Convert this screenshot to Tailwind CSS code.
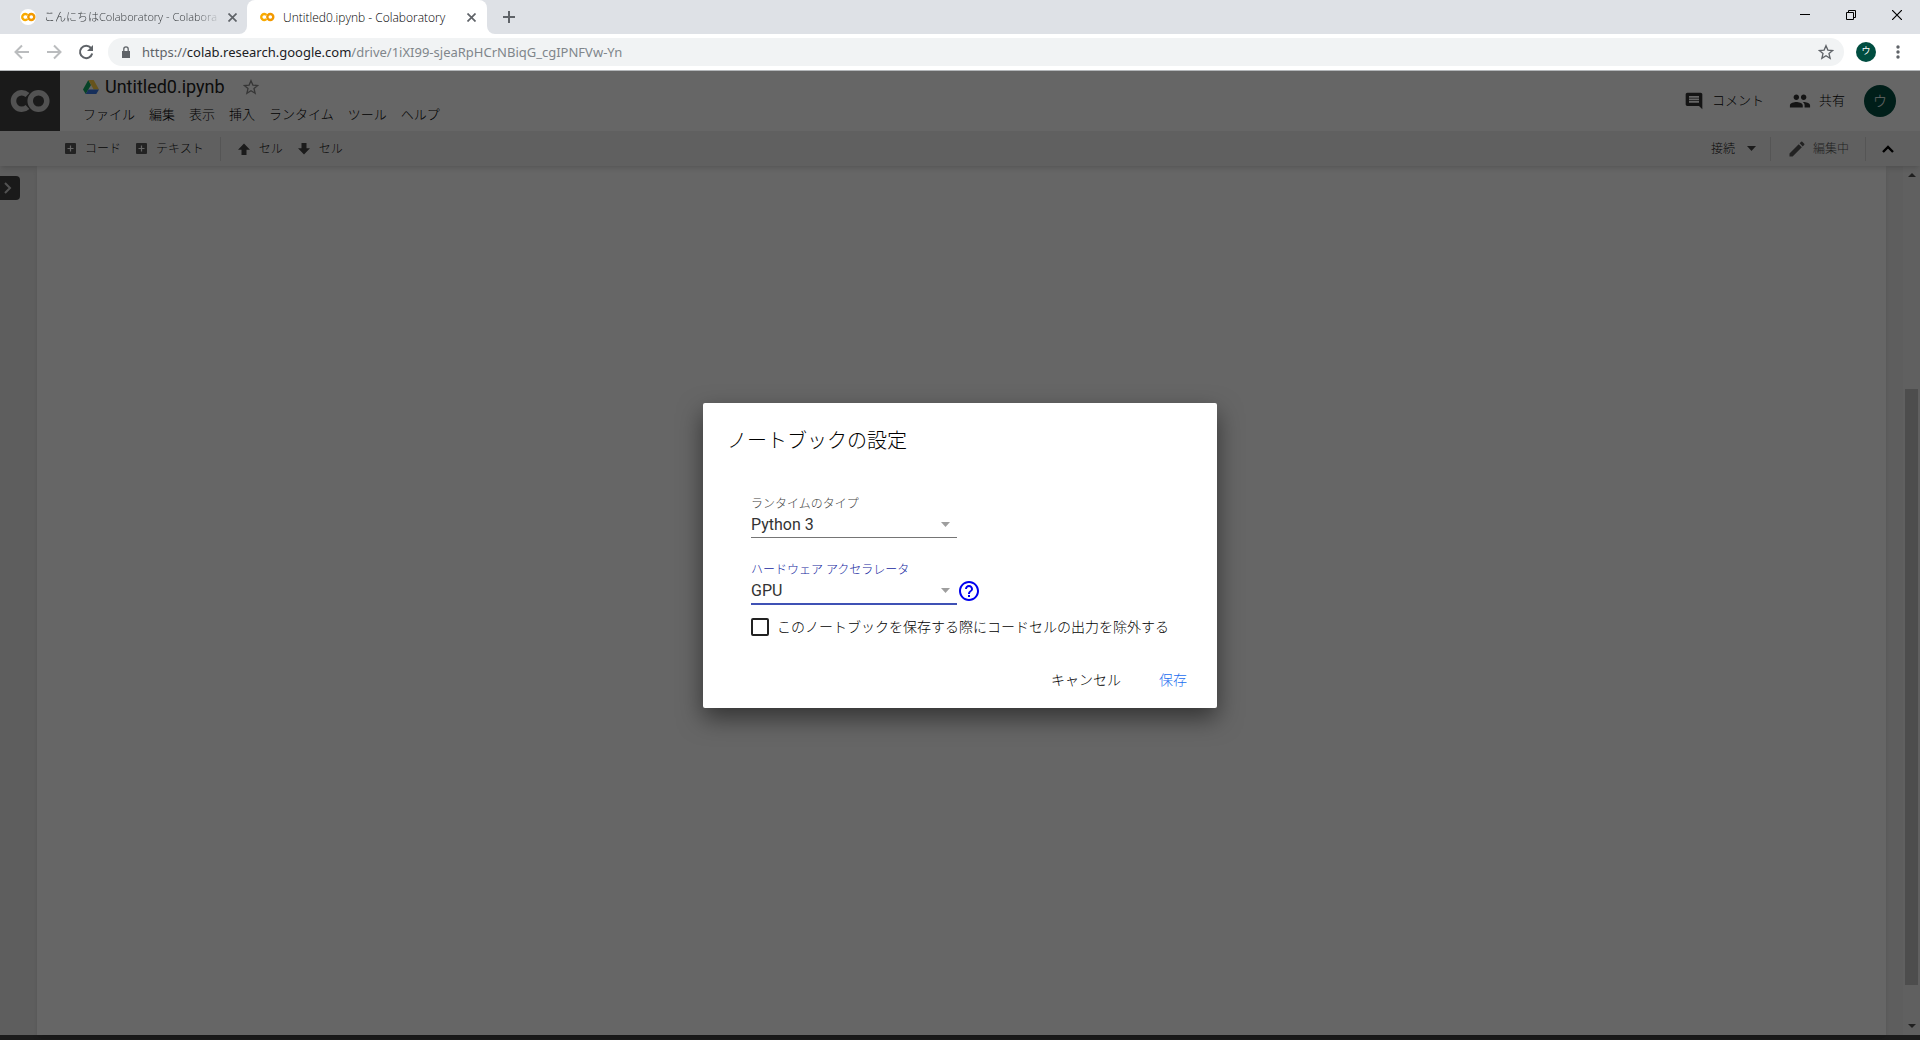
<!DOCTYPE html>
<html lang="ja">
<head>
<meta charset="utf-8">
<title>Untitled0.ipynb - Colaboratory</title>
<script src="https://cdn.jsdelivr.net/npm/@tailwindcss/browser@4"></script>
</head>
<body class="flex h-screen flex-col overflow-hidden bg-white font-['Roboto','Noto_Sans_CJK_JP',sans-serif] font-light text-black">

<!-- Tab strip -->
<div class="flex h-[34px] shrink-0 text-xs font-['Open_Sans','Noto_Sans_CJK_JP',sans-serif]">
  <div class="flex w-[247px] items-center rounded-br-lg bg-[#dee1e6] pl-5 pr-[5px]">
    <span class="grid size-4 shrink-0 place-items-center rounded-full bg-white">
      <svg class="size-4" viewBox="0 0 16 16" fill="none" stroke-width="2.4"><path d="M7.500 6A3 3 0 1 0 7.500 10" stroke="#f9ab00"/><circle cx="11.300" cy="8" r="3" stroke="#f29900"/></svg>
    </span>
    <span class="ml-2 flex-1 whitespace-nowrap bg-linear-to-r from-[#303437] from-85% to-transparent bg-clip-text pt-px text-[11px] text-transparent">こんにちはColaboratory - Colabora</span>
    <button aria-label="閉じる" class="grid size-5 place-items-center"><svg class="size-[9px]" viewBox="0 0 9 9" stroke="#5f6368" stroke-width="1.700"><path d="M.5.5l8 8M8.500.5l-8 8"/></svg></button>
  </div>
  <div class="bg-[#dee1e6]">
    <div class="flex h-full w-60 items-center rounded-t-lg bg-white pl-3 pr-[6px] text-black">
      <svg class="size-4" viewBox="0 0 16 16" fill="none" stroke-width="2.4"><path d="M7.500 6A3 3 0 1 0 7.500 10" stroke="#f9ab00"/><circle cx="11.300" cy="8" r="3" stroke="#f29900"/></svg>
      <span class="ml-2 flex-1 whitespace-nowrap pt-0.5">Untitled0.ipynb - Colaboratory</span>
      <button aria-label="閉じる" class="grid size-5 place-items-center"><svg class="size-[9px]" viewBox="0 0 9 9" stroke="#5f6368" stroke-width="1.700"><path d="M.5.5l8 8M8.500.5l-8 8"/></svg></button>
    </div>
  </div>
  <div class="flex flex-1 items-center rounded-bl-lg bg-[#dee1e6] pl-3">
    <button aria-label="新しいタブ" class="grid size-5 place-items-center"><svg class="size-3" viewBox="0 0 12 12" stroke="#5f6368" stroke-width="2"><path d="M6 0v12M0 6h12"/></svg></button>
    <div class="mb-1 ml-auto flex">
      <button aria-label="最小化" class="grid w-[46px] place-items-center"><svg class="size-[10px]" viewBox="0 0 10 10" stroke="#000"><path d="M0 4.500h10"/></svg></button>
      <button aria-label="元に戻す" class="grid w-[46px] place-items-center"><svg class="size-[10px]" viewBox="0 0 10 10" stroke="#000" fill="none"><path d="M.5 2.500h7v7h-7zM2.500 2.500v-2h7v7h-2"/></svg></button>
      <button aria-label="ウィンドウを閉じる" class="grid w-[46px] place-items-center"><svg class="size-[10px]" viewBox="0 0 10 10" stroke="#000" stroke-width="1.200"><path d="M0 0l10 10M10 0L0 10"/></svg></button>
    </div>
  </div>
</div>

<!-- Address bar -->
<div class="flex h-[37px] shrink-0 items-center border-b border-[#b4b7ba] pl-[14px] pr-3">
  <div class="flex gap-4">
    <button aria-label="戻る" class="size-4"><svg viewBox="0 0 16 16" fill="none" stroke="#babcbe" stroke-width="2"><path d="M15 8H2M8 1.500L1.500 8 8 14.500"/></svg></button>
    <button aria-label="進む" class="size-4"><svg viewBox="0 0 16 16" fill="none" stroke="#babcbe" stroke-width="2"><path d="M1 8h13M8 1.500L14.500 8 8 14.500"/></svg></button>
    <button aria-label="再読み込み" class="size-4"><svg viewBox="0 0 16 16" fill="none" stroke="#5f6368" stroke-width="2"><path d="M13 4A6.200 6.200 0 1 0 14.200 9.500"/><path d="M15 1v6H9z" fill="#5f6368" stroke="none"/></svg></button>
  </div>
  <div class="ml-[14px] flex h-7 flex-1 items-center rounded-full bg-[#f1f3f4] pl-3 pr-[10px] font-normal">
    <svg class="size-3" viewBox="0 0 12 12"><path d="M2 5h8v7H2z" fill="#5f6368"/><path d="M3.800 5V3a2.200 2.200 0 0 1 4.400 0v2" fill="none" stroke="#5f6368" stroke-width="1.300"/></svg>
    <p class="ml-[10px] flex-1 whitespace-nowrap pt-0.5 text-[13px] text-[#80868b] font-['Noto_Sans',sans-serif]"><span class="text-[#5f6368]">https://</span><span class="text-[#202124]">colab.research.google.com</span>/drive/1iXI99-sjeaRpHCrNBiqG_cgIPNFVw-Yn</p>
    <button aria-label="ブックマーク"><svg class="size-4" viewBox="0 0 24 24" fill="none" stroke="#5f6368" stroke-width="2"><path d="M12 2.500l2.800 6.600 7.200.6-5.500 4.700 1.700 7L12 17.600l-6.200 3.800 1.700-7L2 9.700l7.200-.6z"/></svg></button>
  </div>
  <span class="ml-3 grid size-5 place-items-center rounded-full bg-[#004d40] text-[9px] font-normal text-white">ウ</span>
  <button aria-label="メニュー" class="ml-3 grid size-5 place-items-center"><svg class="h-4 w-1" viewBox="0 0 4 16" fill="#5f6368"><circle cx="2" cy="3" r="1.700"/><circle cx="2" cy="8" r="1.700"/><circle cx="2" cy="13" r="1.700"/></svg></button>
</div>

<!-- Notebook page, dimmed by the open dialog -->
<div class="relative flex min-h-0 flex-1 flex-col">
  <header class="flex h-[60px] shrink-0 bg-white">
    <div class="grid w-[60px] place-items-center bg-[#424242]">
      <svg class="h-6 w-10" viewBox="0 0 40 24" fill="none" stroke="#ccc" stroke-width="5.500"><path d="M17.500 6A8.300 8.300 0 1 0 17.500 18"/><circle cx="28.500" cy="12" r="8.300"/></svg>
    </div>
    <div class="pl-[23px]">
      <div class="flex h-8 items-center">
        <svg class="h-[15px] w-4" viewBox="0 0 16 15"><path d="M5.300 0L0 9.500 2.700 14 8 5z" fill="#11a861"/><path d="M5.300 0h5.400L16 9.500h-5.300z" fill="#ffcf48"/><path d="M5.300 9.500H16L13.300 14H2.700z" fill="#3777e3"/></svg>
        <h1 class="ml-[6px] text-lg font-normal text-[#222]">Untitled0.ipynb</h1>
        <button aria-label="スター" class="ml-[18px]"><svg class="size-4" viewBox="0 0 24 24" fill="none" stroke="#888" stroke-width="2"><path d="M12 2.500l2.800 6.600 7.200.6-5.500 4.700 1.700 7L12 17.600l-6.200 3.800 1.700-7L2 9.700l7.200-.6z"/></svg></button>
      </div>
      <nav class="flex h-6 items-center gap-[14px] text-[13px]">
        <button>ファイル</button><button>編集</button><button>表示</button><button>挿入</button><button>ランタイム</button><button>ツール</button><button>ヘルプ</button>
      </nav>
    </div>
    <div class="ml-auto flex items-center pr-6 text-[13px]">
      <button class="flex items-center gap-2"><svg class="size-5" viewBox="0 0 24 24" fill="#333"><path d="M22 4c0-1.100-.9-2-2-2H4c-1.100 0-2 .9-2 2v12c0 1.100.9 2 2 2h14l4 4V4zm-4 10H6v-2h12v2zm0-3H6V9h12v2zm0-3H6V6h12v2z"/></svg>コメント</button>
      <button class="ml-[25px] flex items-center gap-2"><svg class="size-[22px]" viewBox="0 0 24 24" fill="#333"><path d="M16 11c1.660 0 2.990-1.340 2.990-3S17.660 5 16 5s-3 1.340-3 3 1.340 3 3 3zm-8 0c1.660 0 2.990-1.340 2.990-3S9.660 5 8 5 5 6.340 5 8s1.340 3 3 3zm0 2c-2.330 0-7 1.170-7 3.500V19h14v-2.500c0-2.330-4.670-3.500-7-3.500zm8 0c-.29 0-.62.02-.97.050 1.160.84 1.970 1.970 1.970 3.450V19h6v-2.500c0-2.330-4.670-3.500-7-3.500z"/></svg>共有</button>
      <span class="ml-[19px] grid size-8 place-items-center rounded-full bg-[#004d40] text-sm text-white">ウ</span>
    </div>
  </header>

  <div class="z-10 flex h-[35px] shrink-0 items-center bg-[#f1f1f1] pl-16 pr-6 text-xs text-[#111] shadow-md">
    <button class="flex items-center gap-2"><svg class="size-[13px]" viewBox="0 0 13 13"><rect x="1" y="1" width="11" height="11" rx="1" fill="#555"/><path d="M6.500 3.500v6M3.500 6.500h6" stroke="#fff" stroke-width="1.200"/></svg>コード</button>
    <button class="ml-[14px] flex items-center gap-2"><svg class="size-[13px]" viewBox="0 0 13 13"><rect x="1" y="1" width="11" height="11" rx="1" fill="#555"/><path d="M6.500 3.500v6M3.500 6.500h6" stroke="#fff" stroke-width="1.200"/></svg>テキスト</button>
    <span class="mx-4 h-6 w-px bg-[#d5d5d5]"></span>
    <button class="flex items-center gap-2"><svg class="size-[14px]" viewBox="0 0 14 14" fill="#444"><path d="M7 1.500l6 6.200H9.500V13h-5V7.700H1z"/></svg>セル</button>
    <button class="ml-[14px] flex items-center gap-2"><svg class="size-[14px]" viewBox="0 0 14 14" fill="#444"><path d="M7 12.500l6-6.200H9.500V1h-5v5.300H1z"/></svg>セル</button>
    <div class="ml-auto flex items-center">
      <button class="flex items-center gap-3">接続<svg class="h-[5px] w-[9px]" viewBox="0 0 9 5" fill="#444"><path d="M0 0h9L4.500 5z"/></svg></button>
      <span class="ml-[14px] mr-4 h-6 w-px bg-[#d5d5d5]"></span>
      <button class="flex items-center gap-[6px] text-[#555]"><svg class="size-5" viewBox="0 0 24 24" fill="#555"><path d="M3 17.250V21h3.750L17.810 9.940l-3.750-3.750L3 17.250zM20.710 7.040a1 1 0 0 0 0-1.410l-2.340-2.340a1 1 0 0 0-1.410 0l-1.830 1.830 3.750 3.750 1.830-1.830z"/></svg>編集中</button>
      <span class="ml-4 mr-[14px] h-6 w-px bg-[#d5d5d5]"></span>
      <button aria-label="折りたたむ" class="grid w-4 place-items-center"><svg class="h-2 w-3" viewBox="0 0 12 8" fill="none" stroke="#000" stroke-width="2.400"><path d="M1 7l5-5 5 5"/></svg></button>
    </div>
  </div>

  <main class="flex min-h-0 flex-1 bg-[#ebebeb]">
    <div class="w-[37px] pt-[10px]">
      <button aria-label="サイドバーを開く" class="grid h-6 w-5 place-items-center rounded-r-sm bg-[#424242] pr-1"><svg class="h-3 w-2" viewBox="0 0 8 12" fill="none" stroke="#ccc" stroke-width="2"><path d="M1 1l5 5-5 5"/></svg></button>
    </div>
    <div class="flex-1 bg-white shadow-md"></div>
    <div class="w-[17px]"></div>
    <div class="flex w-[17px] flex-col items-center bg-[#f1f1f1] py-[7px]">
      <svg class="h-1 w-2" viewBox="0 0 8 4" fill="#505050"><path d="M4 0l4 4H0z"/></svg>
      <div class="mt-[212px] w-[13px] flex-1 bg-[#c1c1c1]"></div>
      <svg class="mt-[39px] h-1 w-2" viewBox="0 0 8 4" fill="#505050"><path d="M4 4l4-4H0z"/></svg>
    </div>
  </main>

  <div class="absolute inset-0 z-20 flex items-center justify-center bg-black/60 pt-1">
    <form role="dialog" aria-labelledby="dialog-title" class="w-[514px] rounded-xs bg-white px-6 pb-3 pt-[22px] text-sm text-black shadow-[0_10px_24px_rgba(0,0,0,0.5)]">
      <h2 id="dialog-title" class="text-xl leading-8">ノートブックの設定</h2>
      <div class="pl-6">
        <label for="runtime" class="mt-[38px] block text-xs leading-[18px] text-[#444]">ランタイムのタイプ</label>
        <div class="grid w-[206px] items-center border-b border-[#757575]">
          <select id="runtime" class="col-start-1 row-start-1 h-6 appearance-none text-base font-normal text-[#333]"><option>Python 3</option><option>Python 2</option></select>
          <svg class="pointer-events-none col-start-1 row-start-1 mr-[7px] h-[5px] w-[9px] justify-self-end" viewBox="0 0 9 5" fill="#9e9e9e"><path d="M0 0h9L4.500 5z"/></svg>
        </div>
        <label for="accelerator" class="mt-[23px] block text-xs leading-[18px] text-[#1528a0]">ハードウェア アクセラレータ</label>
        <div class="flex">
          <div class="grid w-[206px] items-center border-b-2 border-[#3f51b5]">
            <select id="accelerator" class="col-start-1 row-start-1 h-6 appearance-none text-base font-normal text-[#333]"><option>GPU</option><option>None</option><option>TPU</option></select>
            <svg class="pointer-events-none col-start-1 row-start-1 mr-[7px] h-[5px] w-[9px] justify-self-end" viewBox="0 0 9 5" fill="#9e9e9e"><path d="M0 0h9L4.500 5z"/></svg>
          </div>
          <a href="#help" aria-label="ヘルプ"><svg class="size-6" viewBox="0 0 24 24" fill="#00e"><path d="M11 18h2v-2h-2v2zm1-16C6.480 2 2 6.480 2 12s4.480 10 10 10 10-4.480 10-10S17.520 2 12 2zm0 18c-4.410 0-8-3.590-8-8s3.590-8 8-8 8 3.590 8 8-3.590 8-8 8zm0-14c-2.210 0-4 1.790-4 4h2c0-1.100.9-2 2-2s2 .9 2 2c0 2-3 1.750-3 5h2c0-2.250 3-2.500 3-5 0-2.210-1.790-4-4-4z"/></svg></a>
        </div>
        <div class="mt-[10px] flex h-6 items-center gap-2">
          <input id="omit" type="checkbox" class="size-[18px] appearance-none rounded-xs border-2 border-[#212121]">
          <label for="omit" class="whitespace-nowrap">このノートブックを保存する際にコードセルの出力を除外する</label>
        </div>
      </div>
      <div class="mt-[25px] flex justify-end gap-[38px] pr-[6px] leading-8">
        <button type="button">キャンセル</button>
        <button type="submit" class="text-[#1a6df0]">保存</button>
      </div>
    </form>
  </div>
</div>

<div class="h-[5px] shrink-0 bg-[#1c1c1c]"></div>
</body>
</html>
